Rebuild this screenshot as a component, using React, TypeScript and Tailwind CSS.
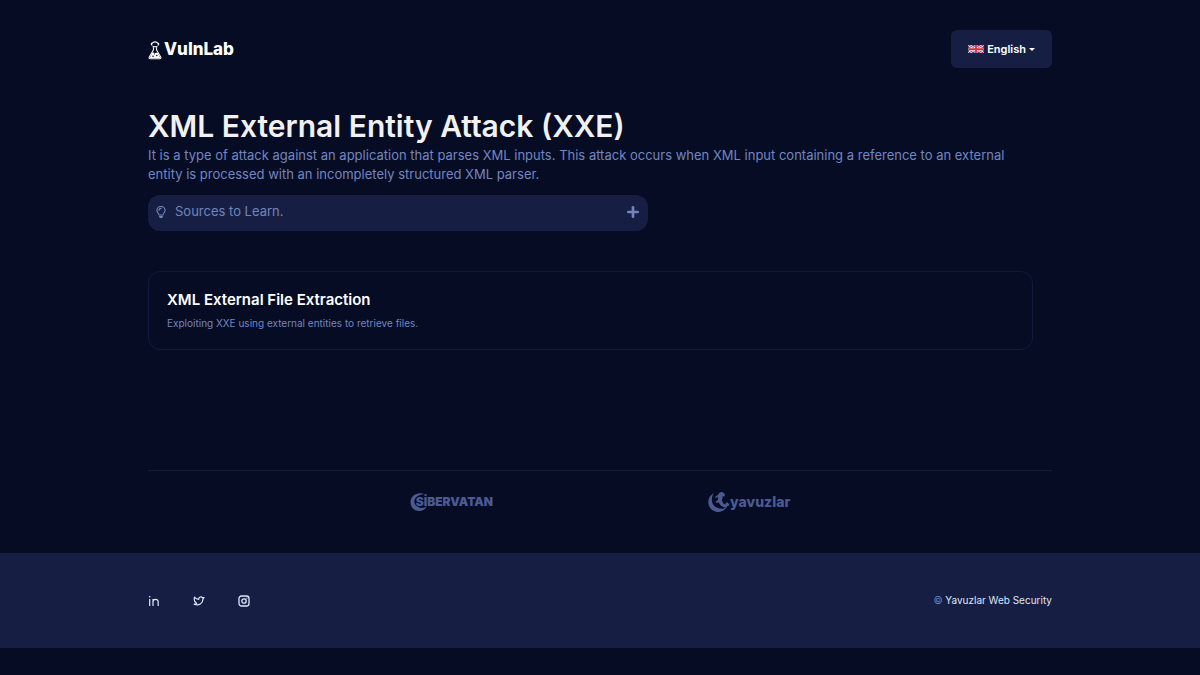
import React, { useState } from 'react';
import { Plus, Minus } from 'lucide-react';

const FlagIcon = () => (
  <svg viewBox="0 0 60 32" className="h-2 w-4" aria-hidden="true">
    <path fill="#3a4a94" d="M0 0h60v32H0z" />
    <path stroke="#fff" strokeWidth="9" d="M0 0l60 32M60 0L0 32" />
    <path stroke="#e0243f" strokeWidth="4" d="M0 0l60 32M60 0L0 32" />
    <path stroke="#fff" strokeWidth="11" d="M30 0v32M0 16h60" />
    <path stroke="#e0243f" strokeWidth="7" d="M30 0v32M0 16h60" />
  </svg>
);

const FlaskIcon = () => (
  <svg viewBox="0 0 14 20" className="h-5 w-3.5" fill="none" stroke="#fff" strokeLinejoin="round" aria-hidden="true">
    <path d="M4.400 5.200C2.800 4.900 3 3.200 4.500 3.200 4.900 1.400 9.100 1.400 9.500 3.200c1.500 0 1.700 1.700.1 2" strokeWidth="1.200" />
    <path d="M4.500 6.700h5" strokeWidth="1.100" />
    <path d="M5.500 7.200v2.600L1.200 17.200c-.4.900 0 1.500.9 1.500h9.800c.9 0 1.300-.6.900-1.500L8.500 9.800V7.200" strokeWidth="1.100" />
    <path d="M4.200 12.700c1.300-.7 2 .8 3.200.4 1-.4 1.700-.4 2.400 0l2.500 4.900H1.700z" fill="#fff" stroke="none" />
    <circle cx="5" cy="16.200" r="0.800" fill="#050c24" stroke="none" />
    <circle cx="8.800" cy="15.500" r="0.800" fill="#050c24" stroke="none" />
    <circle cx="6.500" cy="13.800" r="0.600" fill="#050c24" stroke="none" />
  </svg>
);

const BulbIcon = () => (
  <svg viewBox="0 0 16 16" className="h-3 w-3" fill="none" stroke="currentColor" strokeWidth="1.500" strokeLinecap="round" strokeLinejoin="round" aria-hidden="true">
    <path d="M5.500 12c0-2-3-3-3-6.200a5.500 5.300 0 0 1 11 0c0 3.200-3 4.200-3 6.200zM6 14h4M6.800 15.200h2.400" />
    <path d="M5.300 5.800A2.700 2.600 0 0 1 8 3.200" />
  </svg>
);

const CrescentIcon = () => (
  <svg viewBox="0 0 20 20" className="h-5 w-5" fill="#4b5a91" aria-hidden="true">
    <path d="M15 2.300C7-.8.500 4 .500 10.200c0 6 5.300 10 10.800 8.600 2.700-.6 4.700-2.300 5.700-4.500-2.300 1.700-5 2.200-7.700 1.200C5.500 14.200 3.800 11.500 4.500 8.200 5.200 4.700 9.600 2.200 15 2.300z" />
  </svg>
);

const HorseIcon = () => (
  <svg viewBox="0 0 22 22" className="h-[22px] w-[22px]" fill="#4b5a91" aria-hidden="true">
    <path d="M6 2C2 4.200-.2 7.800.3 12c.6 5.400 5.200 9.300 10.500 8.900 3.700-.3 6.600-2.200 8.100-5.200-2.500 2-5.500 2.500-8.300 1.600-4.300-1.300-7-4.800-6.700-8.900C4 6 4.600 3.900 6 2z" />
    <path d="M10.500 3.200C11.300 1.500 13 .700 14.500 1.300c1.500.5 2.400 1.500 2.400 3l-.6 1.500-1.700-.7c.3 1.700-.1 2.800-.9 3.800l1.600 3.500 2 1.200.4-1.700 1.800-.7.700 1.300 1.100.3-.4 1.900-1.600.3-.5 1.600-2.300-.1-3.500-1.700-2.700-3.600-2.200.8-.5-1.400 2.400-1.500-.2-3.100-2.300 1-.5-1.100z" />
  </svg>
);

const LinkedinIcon = () => (
  <svg viewBox="0 0 12 12" className="h-3 w-3" fill="none" stroke="currentColor" strokeWidth="1.200" aria-hidden="true">
    <path d="M1.700 4v7M5 4v7M5 7c0-3.400 5.200-3.700 5.200 0v4" />
    <circle cx="1.700" cy="1.700" r="0.800" fill="currentColor" stroke="none" />
  </svg>
);

const TwitterIcon = () => (
  <svg viewBox="0 0 12 12" className="h-3 w-3" fill="none" stroke="currentColor" strokeWidth="1.200" strokeLinejoin="round" aria-hidden="true">
    <path d="M5.700 4.300c0-2.600 2.700-3.100 3.700-1.700l1.700-.1-1.200 1.700c.1 4-4.100 7-8.800 5 1.200 0 2-.3 2.500-.9C1.600 7.300.9 4.500 1.500 2.100 2.700 3.500 4 4.200 5.700 4.300z" />
  </svg>
);

const InstagramIcon = () => (
  <svg viewBox="0 0 12 12" className="h-3 w-3" fill="none" stroke="currentColor" strokeWidth="1.300" aria-hidden="true">
    <rect x="1" y="1" width="10" height="10" rx="2.500" />
    <circle cx="6" cy="6" r="2.200" />
    <circle cx="8.900" cy="3.100" r="0.700" fill="currentColor" stroke="none" />
  </svg>
);

const socials = [
  { name: 'LinkedIn', icon: <LinkedinIcon /> },
  { name: 'Twitter', icon: <TwitterIcon /> },
  { name: 'Instagram', icon: <InstagramIcon /> },
];

export default function App() {
  const [open, setOpen] = useState(false);

  return (
    <div className="min-h-screen bg-[#050c24] font-['Inter',sans-serif] text-white">
      <div className="mx-auto w-full max-w-[904px]">
        <header className="flex items-center justify-between pt-[30px]">
          <a href="#" className="flex items-center gap-0.5 pt-0.5 text-[17px] font-extrabold">
            <FlaskIcon />
            VulnLab
          </a>
          <button
            type="button"
            className="flex h-[38px] items-center gap-[3px] rounded-md bg-[#161f43] px-[17px] text-[11px] leading-4 font-semibold"
          >
            <FlagIcon />
            English
            <span className="border-x-[3px] border-t-[3px] border-x-transparent border-t-white" />
          </button>
        </header>

        <main>
          <h1 className="mt-[38px] text-3xl leading-10 font-semibold text-[#f1f1f1]">
            XML External Entity Attack (XXE)
          </h1>
          <p className="max-w-[885px] text-[13px] leading-[19px] text-[#7486c0]">
            It is a type of attack against an application that parses XML inputs. This attack occurs when XML input
            containing a reference to an external entity is processed with an incompletely structured XML parser.
          </p>

          <div className="mt-[11px] max-w-[500px] rounded-xl bg-[#161f43] text-[#7384bd]">
            <button
              type="button"
              aria-expanded={open}
              onClick={() => setOpen(!open)}
              className="flex h-9 w-full items-center gap-2 px-[7px] pb-0.5 text-[13px]"
            >
              <BulbIcon />
              Sources to Learn.
              {open ? (
                <Minus className="ml-auto h-4 w-4" strokeWidth={4} />
              ) : (
                <Plus className="ml-auto h-4 w-4" strokeWidth={4} />
              )}
            </button>
          </div>

          <a href="#" className="mt-10 block max-w-[885px] rounded-xl border border-[#111a3c] px-[18px] pt-4 pb-[15px]">
            <h2 className="text-[15px] leading-6 font-semibold">XML External File Extraction</h2>
            <p className="text-[10px] leading-[22px] text-[#7486c0]">
              Exploiting XXE using external entities to retrieve files.
            </p>
          </a>
        </main>

        <section className="mt-30 flex h-[83px] items-start justify-center gap-[215px] border-t border-[#131c3e] pt-5 text-[#4b5a91]">
          <a href="#" className="flex h-[22px] items-center text-xs font-black">
            <CrescentIcon />
            <span className="-ml-3.5">SİBERVATAN</span>
          </a>
          <a href="#" className="flex h-[22px] items-center text-sm font-extrabold">
            <HorseIcon />
            yavuzlar
          </a>
        </section>
      </div>

      <footer className="bg-[#161f43]">
        <div className="mx-auto flex h-[95px] w-full max-w-[904px] items-center justify-between text-[#dfe5fa]">
          <nav className="flex gap-[33px]">
            {socials.map((social) => (
              <a key={social.name} href="#" aria-label={social.name}>
                {social.icon}
              </a>
            ))}
          </nav>
          <p className="text-[10px]">
            <span className="text-[#7486c0]">©</span> Yavuzlar Web Security
          </p>
        </div>
      </footer>
    </div>
  );
}
